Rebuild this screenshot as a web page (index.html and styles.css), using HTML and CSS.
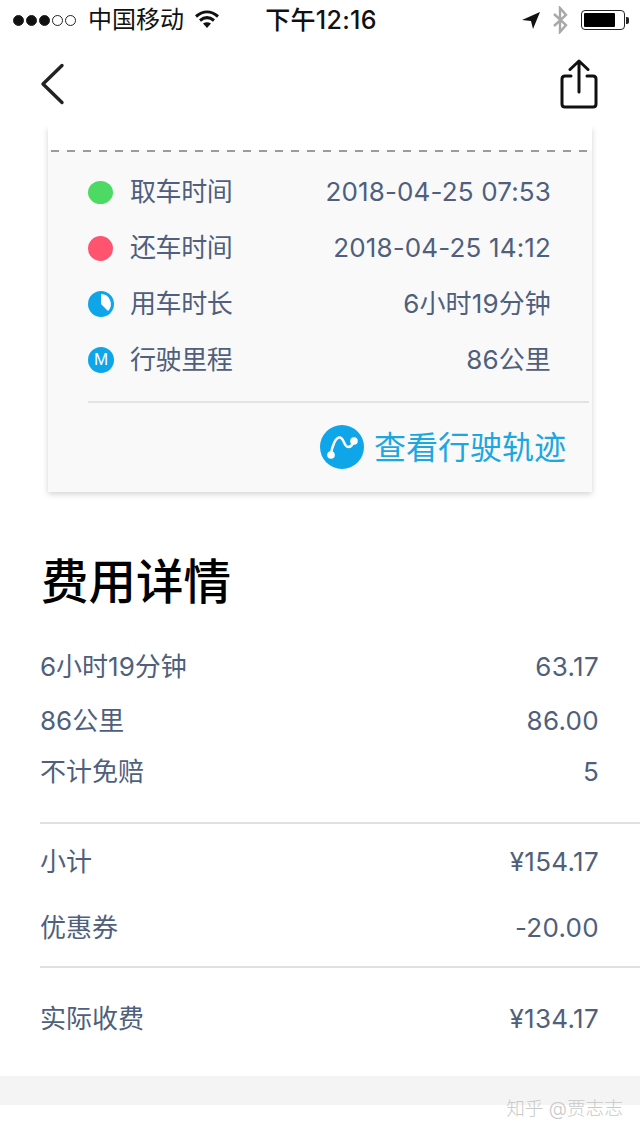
FILE: index.html
```html
<!DOCTYPE html>
<html lang="zh">
<head>
<meta charset="utf-8">
<title>费用详情</title>
<link rel="stylesheet" href="styles.css">
</head>
<body>
<div class="phone">
  <header class="status">
    <div class="status-left">
      <span class="signal"><i class="on"></i><i class="on"></i><i class="on"></i><i></i><i></i></span>
      <span class="carrier">中国移动</span>
      <svg class="wifi" width="26" height="20" viewBox="0 0 26 20"><path d="M2 7.500C9 1.500 17 1.500 24 7.500M6 11.500C10.500 7.800 15.500 7.800 20 11.500" fill="none" stroke="#111" stroke-width="3"/><path d="M9 14.500Q13 12 17 14.500L13 19Z" fill="#111"/></svg>
    </div>
    <div class="time">下午12:16</div>
    <div class="status-right">
      <svg class="loc" width="20" height="20" viewBox="0 0 20 20"><path d="M1 10L19 2L12 19L10 11Z" fill="#111"/></svg>
      <svg class="bt" width="18" height="28" viewBox="0 0 18 28"><path d="M3 8L15 19L9 26V2L15 9L3 20" fill="none" stroke="#a8a8a8" stroke-width="2.400"/></svg>
      <span class="battery"><span class="level"></span></span><span class="nub"></span>
    </div>
  </header>
  <nav class="nav">
    <svg width="26" height="42" viewBox="0 0 26 42"><path d="M22 2.500L3 21L22 39.500" fill="none" stroke="#222" stroke-width="3.400" stroke-linecap="round" stroke-linejoin="round"/></svg>
    <svg width="38" height="50" viewBox="0 0 38 50"><path d="M11 17H5Q2 17 2 20V45Q2 48 5 48H33Q36 48 36 45V20Q36 17 33 17H27M19 33V2M10 10.500L19 2L28 10.500" fill="none" stroke="#111" stroke-width="3" stroke-linecap="round" stroke-linejoin="round"/></svg>
  </nav>
  <section class="card">
    <div class="dash"></div>
    <ul class="trip">
      <li class="trip-row"><span class="dot green"></span><span class="label">取车时间</span><span class="value">2018-04-25 07:53</span></li>
      <li class="trip-row"><span class="dot red"></span><span class="label">还车时间</span><span class="value">2018-04-25 14:12</span></li>
      <li class="trip-row">
        <svg class="dot-icon" width="26" height="26" viewBox="0 0 26 26"><circle cx="13" cy="13" r="13" fill="#0ea5e9"/><path d="M13 3A10 10 0 0 1 20 20L13 13Z" fill="#fff"/></svg>
        <span class="label">用车时长</span><span class="value">6小时19分钟</span></li>
      <li class="trip-row"><span class="dot-m">M</span><span class="label">行驶里程</span><span class="value">86公里</span></li>
    </ul>
    <div class="track">
      <svg width="44" height="44" viewBox="0 0 44 44"><circle cx="22" cy="22" r="22" fill="#0ea5e9"/><path d="M11 30C12 20 16 12 20 12.500C24 13 24 22 28 22C31 22 33 19 34 16" fill="none" stroke="#fff" stroke-width="2.500"/><circle cx="11" cy="30" r="3.800" fill="#fff"/><circle cx="34" cy="16" r="3.800" fill="#fff"/></svg>
      <span>查看行驶轨迹</span>
    </div>
  </section>
  <h1 class="title">费用详情</h1>
  <div class="fee fee-a"><span>6小时19分钟</span><span class="amount">63.17</span></div>
  <div class="fee fee-b"><span>86公里</span><span class="amount">86.00</span></div>
  <div class="fee fee-c"><span>不计免赔</span><span class="amount">5</span></div>
  <div class="fee fee-d"><span>小计</span><span class="amount">¥154.17</span></div>
  <div class="fee fee-e"><span>优惠券</span><span class="amount">-20.00</span></div>
  <div class="fee fee-f"><span>实际收费</span><span class="amount">¥134.17</span></div>
  <div class="band"></div>
  <div class="watermark">知乎 @贾志志</div>
</div>
</body>
</html>
```
FILE: styles.css
```css
* { box-sizing: border-box; }
html, body { margin: 0; padding: 0; background: #fff; }
body { font-family: Inter, "Noto Sans CJK SC", sans-serif; font-weight: 400; }
.phone { width: 640px; height: 1136px; overflow: hidden; position: relative; background: #fff; }

.status { height: 40px; display: grid; grid-template-columns: 1fr auto 1fr; align-items: center; padding: 0 11px 0 13px; color: #111; }
.status-left { display: flex; align-items: center; }
.signal { display: flex; gap: 2px; margin-right: 12px; }
.signal i { width: 11px; height: 11px; border-radius: 50%; border: 1px solid #222; }
.signal i.on { background: #111; }
.carrier { font-size: 24px; line-height: 40px; margin-right: 10px; }
.wifi { margin-top: -3px; }
.time { font-size: 25px; line-height: 40px; font-weight: 500; letter-spacing: .3px; }
.status-right { display: flex; align-items: center; justify-content: flex-end; }
.loc { margin-right: 10px; }
.bt { margin-right: 12px; }
.battery { width: 44px; height: 20px; border: 1.500px solid #222; border-radius: 4px; padding: 2px; display: block; }
.level { display: block; width: 31px; height: 100%; background: #000; border-radius: 1px; }
.nub { width: 3px; height: 7px; background: #222; margin-left: 1px; border-radius: 0 2px 2px 0; }

.nav { height: 87px; display: flex; justify-content: space-between; align-items: center; padding: 0 42px 0 40px; }

.card { width: 544px; height: 365px; margin-left: 48px; background: #f9f9fa; box-shadow: 0 2px 6px rgba(0,0,0,.18); position: relative; clip-path: inset(0 -12px -12px -12px); padding-top: 23px; }
.card::before { content: ""; position: absolute; left: 0; right: 0; top: 0; height: 23px; background: #fff; }
.dash { height: 2px; margin: 0 3px; background: repeating-linear-gradient(90deg, #9a9ca0 0 8px, transparent 8px 16px); }
.trip { list-style: none; margin: 12px 0 0; padding: 0 41px 0 40px; }
.trip-row { height: 56px; display: flex; align-items: center; color: #4f5f7c; font-size: 26px; line-height: 36px; }
.dot { width: 25px; height: 25px; border-radius: 50%; flex: none; }
.green { background: #4cd964; height: 23px; }
.red { background: #ff5470; }
.dot-icon { flex: none; }
.dot-m { width: 26px; height: 26px; border-radius: 50%; background: #0ea5e9; color: #fff; font: 500 17px/26px "Liberation Sans", sans-serif; text-align: center; flex: none; }
.label { margin-left: 16px; flex: 1; letter-spacing: -.4px; }
.dot + .label { margin-left: 17px; }
.value { text-align: right; letter-spacing: .15px; }
.track { margin: 13px 3px 0 40px; border-top: 2px solid #e3e3e5; height: 90px; display: flex; align-items: center; justify-content: flex-end; padding-right: 23px; color: #1da7e0; font-size: 32px; }
.track span { margin-left: 10px; padding-bottom: 5px; }

.title { margin: 58px 0 0 41px; font-size: 47.500px; line-height: 64px; font-weight: 500; color: #000; }
.fee { display: flex; justify-content: space-between; margin-left: 40px; padding-right: 41px; color: #4f5f7c; font-size: 26px; line-height: 36px; }
.amount { letter-spacing: .3px; }
.fee-a { margin-top: 35px; }
.fee-b { margin-top: 18px; }
.fee-c { margin-top: 15px; padding-bottom: 32px; border-bottom: 2px solid #dfe0e2; }
.fee-d { margin-top: 20px; }
.fee-e { margin-top: 30px; padding-bottom: 20px; border-bottom: 2px solid #dfe0e2; }
.fee-f { margin-top: 33px; }
.band { height: 29px; margin-top: 39px; background: #f4f4f4; }
.watermark { position: absolute; right: 17px; top: 1097px; font-size: 18.700px; font-weight: 300; line-height: 24px; color: #c9c9c9; }
```
